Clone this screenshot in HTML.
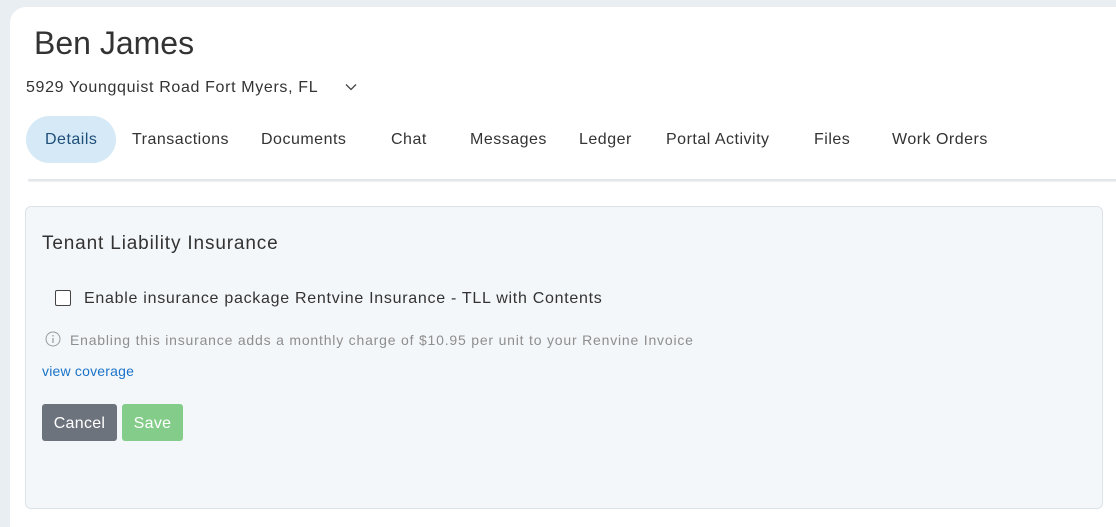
<!DOCTYPE html>
<html><head><style>
body{margin:0;width:1116px;height:515px;background:#e9eef2;font-family:"Liberation Sans",sans-serif;overflow:hidden;position:relative}
.card{position:absolute;left:10px;top:7px;width:1120px;height:520px;background:#fff;border-radius:16px 0 0 0}
.abs{position:absolute;white-space:nowrap}
h1{position:absolute;left:34px;top:25px;margin:0;font-weight:400;font-size:32px;color:#333}
.addr{left:26px;top:79px;font-size:16px;color:#333;letter-spacing:.65px}
.tab{top:131px;font-size:16px;color:#333;letter-spacing:.5px}
.pill{position:absolute;left:26px;top:116px;width:90px;height:47px;border-radius:24px;background:#d5e9f6}
.line{position:absolute;left:28px;top:179px;width:1100px;height:2px;background:#e3e7ea;border-radius:2px;box-shadow:0 1px 1px #eef1f3}
.panel{position:absolute;left:25px;top:206px;width:1076px;height:301px;background:#f4f7fa;border:1px solid #dde2e6;border-radius:6px}
.btn{position:absolute;top:404px;height:37px;border-radius:3px;color:#fff;font-size:16px;line-height:39px;text-align:center;letter-spacing:.3px}
</style></head><body>
<div class="card"></div>
<h1>Ben James</h1>
<div class="abs addr">5929 Youngquist Road Fort Myers, FL</div>
<svg class="abs" style="left:345px;top:83px" width="12" height="8" viewBox="0 0 12 8"><path d="M1 1.5 6 6.5 11 1.5" fill="none" stroke="#444" stroke-width="1.3"/></svg>
<div class="pill"></div>
<div class="abs tab" style="left:45px;color:#1f4e79">Details</div>
<div class="abs tab" style="left:132px">Transactions</div>
<div class="abs tab" style="left:261px">Documents</div>
<div class="abs tab" style="left:391px">Chat</div>
<div class="abs tab" style="left:470px">Messages</div>
<div class="abs tab" style="left:579px">Ledger</div>
<div class="abs tab" style="left:666px">Portal Activity</div>
<div class="abs tab" style="left:814px">Files</div>
<div class="abs tab" style="left:892px">Work Orders</div>
<div class="line"></div>
<div class="panel"></div>
<div class="abs" style="left:42px;top:233px;font-size:19px;color:#333;letter-spacing:.85px">Tenant Liability Insurance</div>
<div class="abs" style="left:55px;top:290px;width:14px;height:14px;border:1.5px solid #444;border-radius:2px;background:#fff"></div>
<div class="abs" style="left:84px;top:290px;font-size:16px;color:#333;letter-spacing:.72px">Enable insurance package Rentvine Insurance - TLL with Contents</div>
<svg class="abs" style="left:45px;top:331px" width="16" height="16" viewBox="0 0 16 16"><circle cx="8" cy="8" r="7" fill="none" stroke="#999" stroke-width="1"/><rect x="7.4" y="7" width="1.2" height="5" fill="#999"/><circle cx="8" cy="4.8" r=".8" fill="#999"/></svg>
<div class="abs" style="left:70px;top:332px;font-size:14px;color:#8e8e8e;letter-spacing:.8px">Enabling this insurance adds a monthly charge of $10.95 per unit to your Renvine Invoice</div>
<div class="abs" style="left:42px;top:363px;font-size:14px;color:#1a73c8;letter-spacing:.2px">view coverage</div>
<div class="btn" style="left:42px;width:75px;background:#6c737c">Cancel</div>
<div class="btn" style="left:122px;width:61px;background:#84cc8a">Save</div>
</body></html>
